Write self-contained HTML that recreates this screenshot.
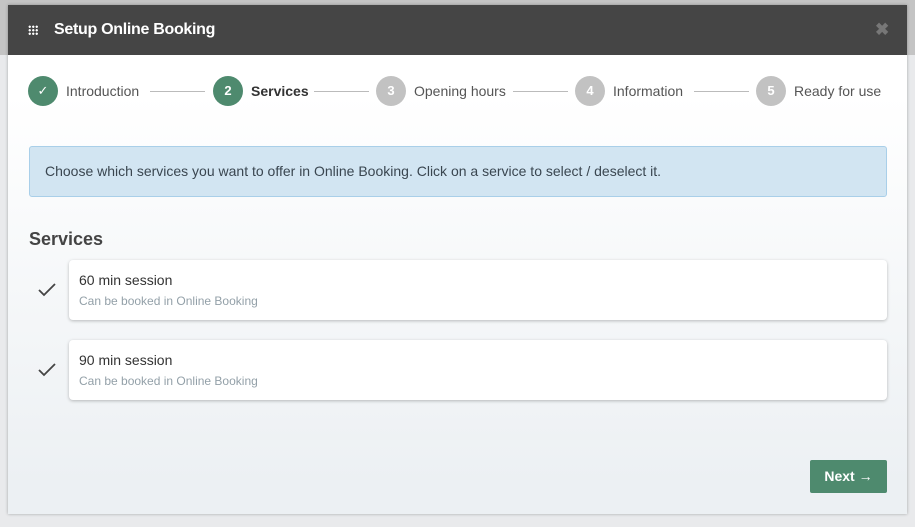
<!DOCTYPE html>
<html><head><style>
body{margin:0;width:915px;height:527px;overflow:hidden;background:#c4c4c4;font-family:"Liberation Sans",sans-serif;position:relative}
.bgl{position:absolute;left:0;top:55px;width:915px;height:472px;background:#e9eaec}
.modal{position:absolute;left:8px;top:5px;width:899px;height:509px;background:linear-gradient(#fff 90px,#ecf0f3 480px);box-shadow:0 0 3px rgba(0,0,0,.3)}
.hdr{height:50px;background:#454545;color:#fff;font-weight:bold;font-size:16px;line-height:50px;padding-left:46px;position:relative;letter-spacing:-0.3px}
.grid{position:absolute;left:20px;top:20px;width:10px;height:10px;background:radial-gradient(circle,#fff 1px,transparent 1.3px) 0 0/3.5px 3.5px}
.x{position:absolute;right:18px;top:0;color:#777;font-size:17px}
.step{position:absolute;top:71px;height:30px;display:flex;align-items:center;font-size:14px;color:#555}
.c{width:30px;height:30px;border-radius:50%;background:#c2c2c2;color:#fff;text-align:center;line-height:30px;font-size:13px;font-weight:bold;margin-right:8px}
.g{background:#4e8a6e}
.line{position:absolute;top:86px;height:1px;background:#bbb}
.info{position:absolute;left:21px;top:141px;width:841px;height:49px;background:#d2e5f2;border:1px solid #a9cfe9;border-radius:3px;color:#3a4650;font-size:14px;line-height:49px;padding-left:15px}
h2{position:absolute;left:21px;top:224px;margin:0;font-size:18px;color:#444;font-weight:bold}
.card{position:absolute;left:61px;width:818px;height:60px;background:#fff;border-radius:4px;box-shadow:0 1px 3px rgba(0,0,0,.25)}
.card b{position:absolute;left:10px;top:12px;font-weight:normal;font-size:14px;color:#333}
.card i{position:absolute;left:10px;top:34px;font-style:normal;font-size:12px;color:#93a0a8}
.chk{position:absolute;left:29px}
.btn{position:absolute;left:802px;top:455px;width:77px;height:33px;background:#4e8a6e;border-radius:2px;color:#fff;font-weight:bold;font-size:14px;line-height:33px;text-align:center}
</style></head><body>
<div class="bgl"></div>
<div class="modal">
<div class="hdr"><span class="grid"></span>Setup Online Booking<span class="x">✖</span></div>
<div class="step" style="left:20px"><div class="c g" style="font-weight:normal">✓</div>Introduction</div>
<div class="line" style="left:142px;width:55px"></div>
<div class="step" style="left:205px;color:#333;font-weight:bold"><div class="c g">2</div>Services</div>
<div class="line" style="left:306px;width:55px"></div>
<div class="step" style="left:368px"><div class="c">3</div>Opening hours</div>
<div class="line" style="left:505px;width:55px"></div>
<div class="step" style="left:567px"><div class="c">4</div>Information</div>
<div class="line" style="left:686px;width:55px"></div>
<div class="step" style="left:748px"><div class="c">5</div>Ready for use</div>
<div class="info">Choose which services you want to offer in Online Booking. Click on a service to select / deselect it.</div>
<h2>Services</h2>
<svg class="chk" style="top:277px" width="20" height="16"><path d="M2 8l5 5L18 2" fill="none" stroke="#444" stroke-width="1.8"/></svg>
<div class="card" style="top:255px"><b>60 min session</b><i>Can be booked in Online Booking</i></div>
<svg class="chk" style="top:357px" width="20" height="16"><path d="M2 8l5 5L18 2" fill="none" stroke="#444" stroke-width="1.8"/></svg>
<div class="card" style="top:335px"><b>90 min session</b><i>Can be booked in Online Booking</i></div>
<div class="btn">Next →</div>
</div>
</body></html>
